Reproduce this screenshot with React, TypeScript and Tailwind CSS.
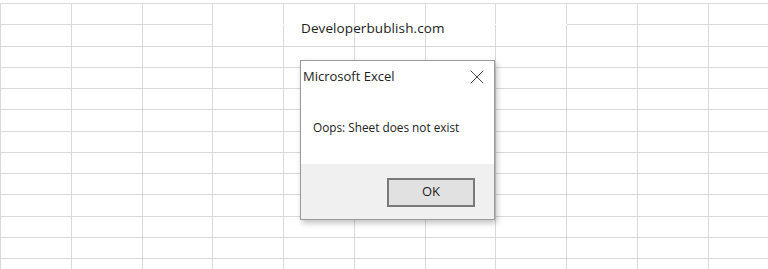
import { X } from 'lucide-react';

const COLS = 11;
const ROWS = 13;

export default function App() {
  const cells = [];
  for (let r = 0; r < ROWS; r++) {
    for (let c = 0; c < COLS; c++) {
      // the line under row 0 is hidden behind the title text box
      const hideBottom = r === 0 && c >= 3 && c <= 7;
      cells.push(
        <div
          key={`${r}-${c}`}
          className={`border-r border-[#d9d9d9] ${hideBottom ? 'border-b-0 mb-px' : 'border-b'}`}
        />
      );
    }
  }

  return (
    <div className="relative w-[768px] h-[269px] overflow-hidden bg-white font-['Open_Sans',sans-serif] text-[#222]">
      {/* sheet grid */}
      <div className="pt-[3px]">
        <div className="grid grid-cols-[repeat(11,70.75px)] grid-rows-[repeat(13,21.27px)] border-t border-l border-[#d9d9d9]">
          {cells}
        </div>
      </div>

      <div className="absolute left-[301px] top-[19px] text-[13.5px] leading-[18px] tracking-[0.1px]">
        Developerbublish.com
      </div>

      {/* message box */}
      <div className="absolute left-[300px] top-[60px] w-[195px] h-[160px] flex flex-col border border-[#9a9a9a] bg-white shadow-[2px_3px_6px_rgba(0,0,0,0.25)]">
        <div className="flex items-center justify-between h-[32px] pl-[2px] pr-[5px] text-[13px]">
          <span>Microsoft Excel</span>
          <X className="w-[24px] h-[24px] text-[#333]" strokeWidth={0.9} />
        </div>
        <div className="flex-1 pl-[12px] pt-[26px] text-[11.8px]">Oops: Sheet does not exist</div>
        <div className="h-[55px] bg-[#f0f0f0] flex items-center justify-end pr-[19px] pt-[1px]">
          <button className="w-[88px] h-[29px] border-2 border-[#7a7a7a] bg-[#e1e1e1] text-[13px] text-[#222]">
            OK
          </button>
        </div>
      </div>
    </div>
  );
}
